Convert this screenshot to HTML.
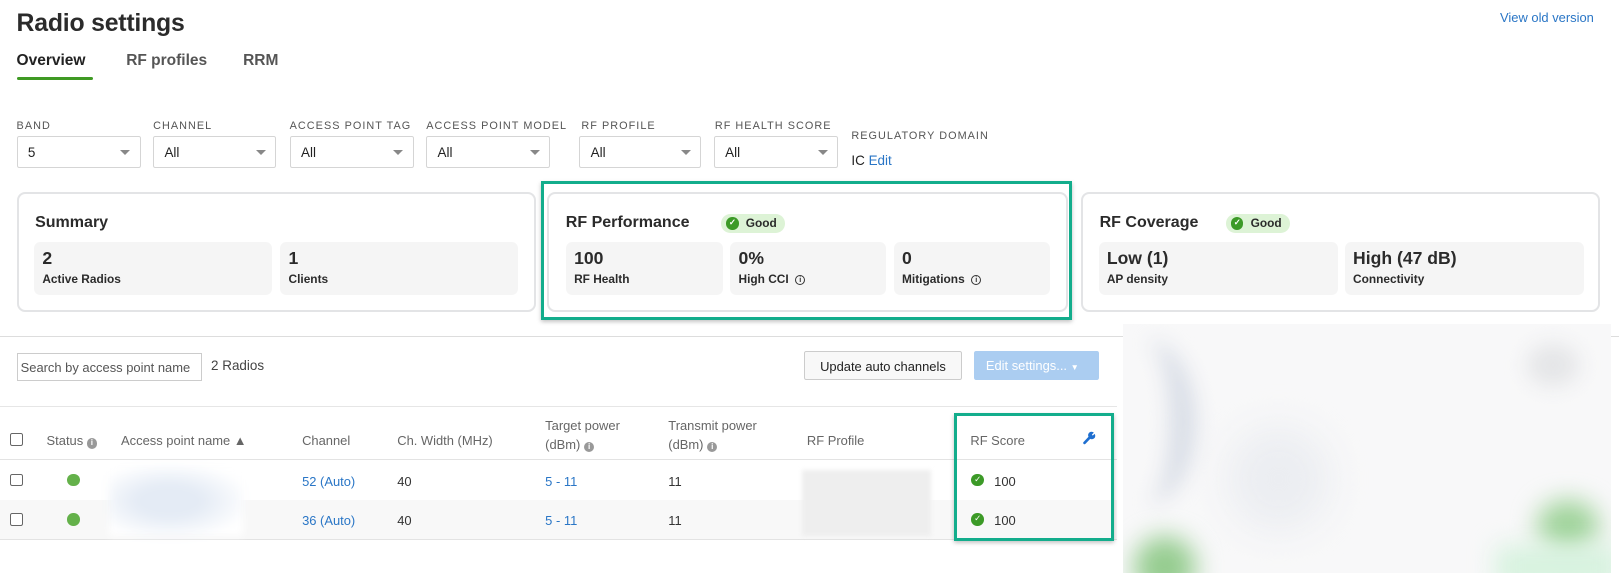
<!DOCTYPE html>
<html><head><meta charset="utf-8"><style>
*{box-sizing:border-box;margin:0;padding:0}
html,body{width:1619px;height:573px;overflow:hidden;background:#fff}
#w{position:relative;width:1565px;height:554px;zoom:1.0345;font-family:"Liberation Sans",sans-serif;color:#222}
.a{position:absolute;white-space:nowrap}
h1{position:absolute;left:16px;top:10px;font-size:24px;font-weight:bold;color:#2b2b2b;letter-spacing:-0.2px}
.tab{position:absolute;top:50px;font-size:15px;font-weight:bold;color:#555}
.lbl{position:absolute;font-size:10.5px;letter-spacing:1px;color:#555}
.sel{position:absolute;top:131px;height:31px;border:1px solid #d5d5d5;border-radius:2px;font-size:13px;padding:8px 10px;color:#222}
.sel:after{content:"";position:absolute;right:9px;top:13px;border-left:5px solid transparent;border-right:5px solid transparent;border-top:5px solid #888}
.card{position:absolute;top:186px;height:116px;border:2px solid #e3e4e6;border-radius:8px;background:#fff}
.ct{position:absolute;left:16px;top:18px;font-size:15.5px;font-weight:bold;color:#2b2b2b}
.tile{position:absolute;top:46px;height:51px;background:#f5f5f5;border-radius:6px}
.tv{position:absolute;left:8px;top:6px;font-size:17px;font-weight:bold;color:#2b2b2b}
.tl{position:absolute;left:8px;top:29px;font-size:11.5px;font-weight:bold;color:#2b2b2b}
.badge{position:absolute;top:19px;height:18px;background:#ddf3d6;border-radius:9px;font-size:11.5px;font-weight:bold;padding:2px 8px 0 24px;color:#2b2b2b}
.badge:before{content:"✓";position:absolute;left:5px;top:3px;width:12px;height:12px;border-radius:50%;background:#3c9a27;color:#fff;font-size:8px;line-height:12px;text-align:center}
.info{display:inline-block;width:10px;height:10px;border:1px solid #333;border-radius:50%;font-size:7px;line-height:8px;text-align:center;vertical-align:1px;margin-left:3px;font-weight:bold}
.th{position:absolute;font-size:12.5px;color:#666}
.td{position:absolute;font-size:12.5px;color:#333}
.blue{color:#2a76c6}
.cb{position:absolute;left:10px;width:12px;height:12px;border:1px solid #666;border-radius:2px;background:#fff}
.dot{position:absolute;left:65px;width:12px;height:12px;border-radius:50%;background:#64b14a}
.ok{position:absolute;left:939px;width:12px;height:12px;border-radius:50%;background:#3c9a27;color:#fff;font-size:8px;line-height:12px;text-align:center}
.ii{display:inline-block;width:10px;height:10px;border-radius:50%;background:#999;color:#fff;font-size:8px;line-height:10px;text-align:center;font-weight:bold;vertical-align:0}
</style></head><body><div id="w">
<h1>Radio settings</h1>
<div class="a blue" style="left:1450px;top:10px;font-size:12.5px">View old version</div>
<div class="tab" style="left:16px;color:#222">Overview</div>
<div class="a" style="left:16px;top:74px;width:74px;height:3px;background:#3f9a23;border-radius:2px"></div>
<div class="tab" style="left:122px">RF profiles</div>
<div class="tab" style="left:235px">RRM</div>

<div class="lbl" style="left:16px;top:116px">BAND</div>
<div class="lbl" style="left:148px;top:116px">CHANNEL</div>
<div class="lbl" style="left:280px;top:116px">ACCESS POINT TAG</div>
<div class="lbl" style="left:412px;top:116px">ACCESS POINT MODEL</div>
<div class="lbl" style="left:562px;top:116px">RF PROFILE</div>
<div class="lbl" style="left:691px;top:116px">RF HEALTH SCORE</div>
<div class="lbl" style="left:823px;top:126px">REGULATORY DOMAIN</div>
<div class="sel" style="left:16px;width:120px">5</div>
<div class="sel" style="left:148px;width:119px">All</div>
<div class="sel" style="left:280px;width:120px">All</div>
<div class="sel" style="left:412px;width:120px">All</div>
<div class="sel" style="left:560px;width:118px">All</div>
<div class="sel" style="left:690px;width:120px">All</div>
<div class="a" style="left:823px;top:148px;font-size:13px">IC <span class="blue">Edit</span></div>

<div class="card" style="left:16px;width:502px">
 <div class="ct">Summary</div>
 <div class="tile" style="left:15px;width:230px"><div class="tv">2</div><div class="tl">Active Radios</div></div>
 <div class="tile" style="left:253px;width:230px"><div class="tv">1</div><div class="tl">Clients</div></div>
</div>
<div class="a" style="left:523px;top:175px;width:513px;height:134px;border:3px solid #13ad8c;box-shadow:0 2px 4px rgba(0,0,0,.25)"></div>
<div class="card" style="left:529px;width:503px;top:186px">
 <div class="ct">RF Performance</div>
 <div class="badge" style="left:166px">Good</div>
 <div class="tile" style="left:16px;width:152px"><div class="tv">100</div><div class="tl">RF Health</div></div>
 <div class="tile" style="left:175px;width:151px"><div class="tv">0%</div><div class="tl">High CCI <span class="info">i</span></div></div>
 <div class="tile" style="left:333px;width:151px"><div class="tv">0</div><div class="tl">Mitigations <span class="info">i</span></div></div>
</div>
<div class="card" style="left:1045px;width:502px">
 <div class="ct">RF Coverage</div>
 <div class="badge" style="left:138px">Good</div>
 <div class="tile" style="left:15px;width:231px"><div class="tv">Low (1)</div><div class="tl">AP density</div></div>
 <div class="tile" style="left:253px;width:231px"><div class="tv">High (47 dB)</div><div class="tl">Connectivity</div></div>
</div>

<div class="a" style="left:0;top:325px;width:1565px;height:1px;background:#ddd"></div>
<div class="a" style="left:16px;top:341px;width:179px;height:27px;border:1px solid #ccc;font-size:12.5px;color:#555;padding:6px 3px;overflow:hidden">Search by access point name</div>
<div class="a" style="left:204px;top:346px;font-size:13px;color:#444">2 Radios</div>
<div class="a" style="left:777px;top:339px;width:153px;height:28px;border:1px solid #ccc;border-radius:2px;background:#f8f8f8;font-size:12.5px;padding:7px 0;text-align:center">Update auto channels</div>
<div class="a" style="left:942px;top:339px;width:120px;height:28px;border-radius:2px;background:#abcdf1;color:#fff;font-size:12.5px;padding:7px 0 0 11px">Edit settings... <span style="font-size:8px">▼</span></div>

<div class="a" style="left:0;top:392px;width:1080px;height:1px;background:#e6e6e6"></div>
<div class="a" style="left:0;top:444px;width:1080px;height:1px;background:#e3e3e3"></div>
<div class="a" style="left:0;top:483px;width:1080px;height:39px;background:#f8f8f8"></div>
<div class="a" style="left:0;top:521px;width:1080px;height:1px;background:#e3e3e3"></div>

<div class="cb" style="top:419px"></div>
<div class="th" style="left:45px;top:419px">Status <span class="ii">i</span></div>
<div class="th" style="left:117px;top:419px">Access point name ▲</div>
<div class="th" style="left:292px;top:419px">Channel</div>
<div class="th" style="left:384px;top:419px">Ch. Width (MHz)</div>
<div class="th" style="left:527px;top:403px;line-height:18px">Target power<br>(dBm) <span class="ii">i</span></div>
<div class="th" style="left:646px;top:403px;line-height:18px">Transmit power<br>(dBm) <span class="ii">i</span></div>
<div class="th" style="left:780px;top:419px">RF Profile</div>
<div class="th" style="left:938px;top:419px">RF Score</div>
<svg class="a" style="left:1047px;top:417px" width="12" height="13" viewBox="0 0 12 13"><path d="M1.5 11.5 L6.5 6.2" stroke="#1f6fd0" stroke-width="2.6" stroke-linecap="round"/><path d="M6 6.5 A3.2 3.2 0 0 1 10.5 1.6 L8.6 3.5 L9.4 4.5 L11.2 2.8 A3.2 3.2 0 0 1 6.6 7.2 Z" fill="#1f6fd0"/></svg>

<div class="cb" style="top:458px"></div><div class="dot" style="top:458px"></div>
<div class="cb" style="top:496px"></div><div class="dot" style="top:496px"></div>
<div class="a" style="left:105px;top:450px;width:130px;height:68px;background:radial-gradient(ellipse at 45% 50%,#e4ebf5 30%,#fff 80%);filter:blur(4px)"></div>
<div class="a" style="left:775px;top:454px;width:125px;height:64px;background:#eeeeee;filter:blur(2px)"></div>
<div class="td blue" style="left:292px;top:458px">52 (Auto)</div>
<div class="td blue" style="left:292px;top:496px">36 (Auto)</div>
<div class="td" style="left:384px;top:458px">40</div><div class="td" style="left:384px;top:496px">40</div>
<div class="td blue" style="left:527px;top:458px">5 - 11</div><div class="td blue" style="left:527px;top:496px">5 - 11</div>
<div class="td" style="left:646px;top:458px">11</div><div class="td" style="left:646px;top:496px">11</div>
<div class="ok" style="top:458px">✓</div><div class="td" style="left:961px;top:458px">100</div>
<div class="ok" style="top:496px">✓</div><div class="td" style="left:961px;top:496px">100</div>
<div class="a" style="left:922px;top:399px;width:155px;height:124px;border:3px solid #13ad8c;box-shadow:0 2px 4px rgba(0,0,0,.25)"></div>

<div class="a" style="left:1086px;top:313px;width:471px;height:241px;background:#f8f8f9;overflow:hidden">
 <div class="a" style="left:-30px;top:15px;width:100px;height:160px;border-radius:50%;border-right:26px solid #d8dde6;filter:blur(10px)"></div>
 <div class="a" style="left:100px;top:100px;width:100px;height:100px;border-radius:50%;background:#ebedf1;filter:blur(18px)"></div>
 <div class="a" style="left:390px;top:20px;width:50px;height:40px;border-radius:50%;background:#e4e5e7;filter:blur(10px)"></div>
 <div class="a" style="left:400px;top:170px;width:60px;height:50px;border-radius:50%;background:#9fd39a;filter:blur(12px)"></div>
 <div class="a" style="left:360px;top:215px;width:120px;height:40px;background:#d6f2de;filter:blur(12px)"></div>
 <div class="a" style="left:10px;top:205px;width:60px;height:60px;border-radius:50%;background:#95cc8f;filter:blur(12px)"></div>
</div>
</div></body></html>
